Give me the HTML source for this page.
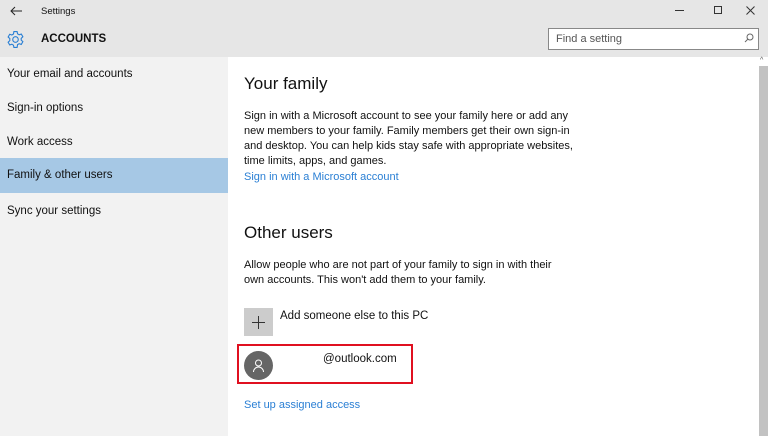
<!DOCTYPE html>
<html><head><meta charset="utf-8"><style>
*{margin:0;padding:0;box-sizing:border-box}
body{width:768px;height:436px;overflow:hidden;font-family:"Segoe UI","Liberation Sans",sans-serif;background:#fff;position:relative;color:#000}
.hdr{position:absolute;left:0;top:0;width:768px;height:57px;background:#e6e6e6}
.side{position:absolute;left:0;top:57px;width:228px;height:379px;background:#f2f2f2}
.item{position:absolute;left:0;width:228px;height:35px;font-size:11.5px;padding-left:7px;line-height:35px;color:#111}
.sel{background:#a6c8e5}
.t{position:absolute;font-size:11px;line-height:15px;color:#111}
.h{position:absolute;font-size:17px;color:#111}
.link{position:absolute;font-size:11px;color:#2a7fd4}
</style></head><body>
<div class="hdr"></div>
<svg style="position:absolute;left:9px;top:5px" width="14" height="12" viewBox="0 0 14 12"><path d="M13 6H2M6 2L2 6l4 4" fill="none" stroke="#222" stroke-width="1"/></svg>
<div class="t" style="left:41px;top:4px;font-size:9.5px">Settings</div>
<div style="position:absolute;left:675px;top:10px;width:9px;height:1px;background:#333"></div>
<div style="position:absolute;left:714px;top:6px;width:8px;height:8px;border:1px solid #333"></div>
<svg style="position:absolute;left:746px;top:6px" width="9" height="9" viewBox="0 0 9 9"><path d="M0.5 0.5l8 8M8.5 0.5l-8 8" stroke="#333" stroke-width="1"/></svg>
<svg style="position:absolute;left:6px;top:30px" width="19" height="19" viewBox="0 0 24 24"><path d="M12 8.5a3.5 3.5 0 1 0 0 7a3.5 3.5 0 1 0 0-7zM10 2h4l.6 2.8 2 1.2 2.7-.9 2 3.5-2.1 1.9v2.3l2.1 1.9-2 3.5-2.7-.9-2 1.2L14 22h-4l-.6-2.8-2-1.2-2.7.9-2-3.5 2.1-1.9V10.8L2.7 8.9l2-3.5 2.7.9 2-1.2z" fill="none" stroke="#2a7fd4" stroke-width="1.4"/></svg>
<div class="t" style="left:41px;top:32px;font-size:11.5px;font-weight:bold">ACCOUNTS</div>
<div style="position:absolute;left:548px;top:28px;width:211px;height:22px;border:1px solid #888;background:#fff"></div>
<div class="t" style="left:556px;top:32px;color:#555;font-size:11px">Find a setting</div>
<svg style="position:absolute;left:744px;top:33px" width="10" height="10" viewBox="0 0 10 10"><circle cx="6" cy="4" r="3" fill="none" stroke="#666"/><path d="M4 6L1 9" stroke="#666"/></svg>
<div class="side"></div>
<div class="item" style="top:57px">Your email and accounts</div>
<div class="item" style="top:91px">Sign-in options</div>
<div class="item" style="top:125px">Work access</div>
<div class="item sel" style="top:158px">Family &amp; other users</div>
<div class="item" style="top:194px">Sync your settings</div>
<div style="position:absolute;left:759px;top:66px;width:9px;height:370px;background:#c2c2c2"></div>
<div style="position:absolute;left:760px;top:57px;font-size:7px;color:#555">^</div>
<div class="h" style="left:244px;top:74px">Your family</div>
<div class="t" style="left:244px;top:109px;width:330px">Sign in with a Microsoft account to see your family here or add any new members to your family. Family members get their own sign-in and desktop. You can help kids stay safe with appropriate websites, time limits, apps, and games.</div>
<div class="link" style="left:244px;top:170px;line-height:15px;top:170px">Sign in with a Microsoft account</div>
<div class="h" style="left:244px;top:223px">Other users</div>
<div class="t" style="left:244px;top:258px;width:330px">Allow people who are not part of your family to sign in with their own accounts. This won't add them to your family.</div>
<div style="position:absolute;left:244px;top:308px;width:29px;height:28px;background:#ccc"></div>
<div style="position:absolute;left:252px;top:322px;width:13px;height:1px;background:#333"></div>
<div style="position:absolute;left:258px;top:316px;width:1px;height:13px;background:#333"></div>
<div class="t" style="left:280px;top:309px;font-size:11.5px">Add someone else to this PC</div>
<div style="position:absolute;left:237px;top:344px;width:176px;height:40px;border:2px solid #e01020"></div>
<div style="position:absolute;left:244px;top:351px;width:29px;height:29px;border-radius:50%;background:#666"></div>
<svg style="position:absolute;left:251px;top:358px" width="15" height="15" viewBox="0 0 15 15"><circle cx="7.5" cy="5" r="3" fill="none" stroke="#fff"/><path d="M2.5 14a5 5 0 0 1 10 0" fill="none" stroke="#fff"/></svg>
<div class="t" style="left:323px;top:352px;font-size:11.5px">@outlook.com</div>
<div class="link" style="left:244px;top:398px;line-height:15px">Set up assigned access</div>
</body></html>
